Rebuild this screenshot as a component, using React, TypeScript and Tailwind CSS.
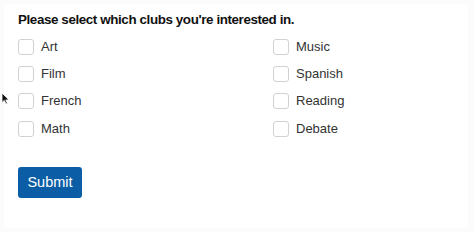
const leftClubs = ["Art", "Film", "French", "Math"];
const rightClubs = ["Music", "Spanish", "Reading", "Debate"];

function ClubOption({ label }: { label: string }) {
  return (
    <label className="flex h-[27.3px] items-center gap-[7px]">
      <span className="h-[16px] w-[16px] shrink-0 rounded-[3px] border border-[#d2d2d2] bg-white" />
      <span className="text-[13px] text-[#333]">{label}</span>
    </label>
  );
}

function Cursor() {
  return (
    <svg className="absolute left-[1px] top-[92px]" width="9" height="13" viewBox="0 0 9 13">
      <path d="M1 1 L1 10.5 L3.3 8.4 L5 12 L6.4 11.4 L4.8 7.9 L8 7.9 Z" fill="#111" stroke="#fff" strokeWidth="0.8" />
    </svg>
  );
}

export default function App() {
  return (
    <div
      className="relative h-[232px] w-[474px] overflow-hidden bg-[#fbfbfb] pl-[4px] pt-[4px] pr-[6px] pb-[4px]"
      style={{ fontFamily: '"Liberation Sans", Arial, sans-serif' }}
    >
      <div className="h-full bg-white pl-[14px] pt-[7px]">
        <h2 className="text-[13.4px] font-bold leading-[18px] tracking-[-0.4px] text-[#111]">
          Please select which clubs you're interested in.
        </h2>
        <div className="mt-[4px] grid grid-cols-[255px_1fr]">
          <div className="flex flex-col">
            {leftClubs.map((c) => (
              <ClubOption key={c} label={c} />
            ))}
          </div>
          <div className="flex flex-col">
            {rightClubs.map((c) => (
              <ClubOption key={c} label={c} />
            ))}
          </div>
        </div>
        <button className="mt-[25px] h-[31px] w-[64px] rounded-[3px] bg-[#0b5ea6] text-[14.5px] text-white">
          Submit
        </button>
      </div>
      <Cursor />
    </div>
  );
}
